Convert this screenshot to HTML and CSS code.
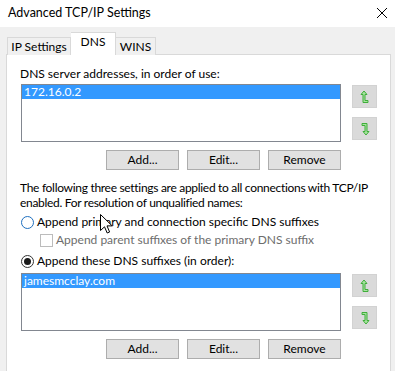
FILE: index.html
```html
<!DOCTYPE html>
<html>
<head>
<meta charset="utf-8">
<link rel="stylesheet" href="styles.css">
</head>
<body>
<div class="dialog">
  <div class="titlebar">
    <span class="title">Advanced TCP/IP Settings</span>
    <svg class="close" width="12" height="12" viewBox="0 0 12 12"><path d="M1 1L11 11M11 1L1 11" stroke="#000" stroke-width="1"/></svg>
  </div>
  <div class="body">
    <div class="tabs">
      <div class="tab first">IP Settings</div>
      <div class="tab active">DNS</div>
      <div class="tab last">WINS</div>
    </div>
    <div class="panel">
      <div class="label">DNS server addresses, in order of use:</div>
      <div class="listrow">
        <div class="listbox"><div class="item">172.16.0.2</div></div>
        <div class="arrows">
          <div class="arrowbtn"><svg width="10" height="14" viewBox="0 0 10 14"><path d="M4 1L1 4.5H3V12.5H8V10.5H5V4.5H7Z" fill="#a7e3a0" stroke="#3fae3a" stroke-width="1" stroke-linejoin="miter"/></svg></div>
          <div class="arrowbtn"><svg width="10" height="14" viewBox="0 0 10 14"><path d="M2 1.5H7V9.5H9L6 13L3 9.5H5V3.5H2Z" fill="#a7e3a0" stroke="#3fae3a" stroke-width="1"/></svg></div>
        </div>
      </div>
      <div class="btnrow">
        <div class="btn">Add...</div>
        <div class="btn">Edit...</div>
        <div class="btn">Remove</div>
      </div>
      <p class="note">The following three settings are applied to all connections with TCP/IP<br>enabled. For resolution of unqualified names:</p>
      <div class="opt radio-row"><span class="radio"></span>Append primary and connection specific DNS suffixes</div>
      <div class="opt check-row"><span class="check"></span>Append parent suffixes of the primary DNS suffix</div>
      <div class="opt radio-row2"><span class="radio on"><span class="dot"></span></span>Append these DNS suffixes (in order):</div>
      <div class="listrow second">
        <div class="listbox"><div class="item">jamesmcclay.com</div></div>
        <div class="arrows">
          <div class="arrowbtn"><svg width="10" height="14" viewBox="0 0 10 14"><path d="M4 1L1 4.5H3V12.5H8V10.5H5V4.5H7Z" fill="#a7e3a0" stroke="#3fae3a" stroke-width="1"/></svg></div>
          <div class="arrowbtn"><svg width="10" height="14" viewBox="0 0 10 14"><path d="M2 1.5H7V9.5H9L6 13L3 9.5H5V3.5H2Z" fill="#a7e3a0" stroke="#3fae3a" stroke-width="1"/></svg></div>
        </div>
      </div>
      <div class="btnrow">
        <div class="btn">Add...</div>
        <div class="btn">Edit...</div>
        <div class="btn">Remove</div>
      </div>
    </div>
  </div>
  <svg class="cursor" width="13" height="20" viewBox="0 0 13 20"><path d="M0.5 0.5V16.5L4.5 12.8L7.2 19L9.6 18L7 11.9H12.2Z" fill="#fff" stroke="#000" stroke-width="1" stroke-linejoin="miter"/></svg>
</div>
</body>
</html>
```
FILE: styles.css
```css
html, body {
  margin: 0;
  padding: 0;
  background: #f0f0f0;
}
body {
  font-family: Lato, "Noto Sans", sans-serif;
  font-size: 12px;
  color: #000;
}
.dialog {
  position: relative;
  width: 395px;
  height: 371px;
  overflow: hidden;
}
.titlebar {
  height: 27px;
  background: #fff;
  display: flex;
  align-items: center;
  justify-content: space-between;
  padding: 0 7px 2px 8px;
  box-sizing: border-box;
}
.title {
  font-size: 12.5px;
}
.body {
  padding: 6px 4px 0 6px;
}
.tabs {
  display: flex;
  align-items: flex-end;
  height: 22px;
  padding-left: 1px;
  position: relative;
  z-index: 1;
  margin-bottom: -1px;
}
.tab {
  height: 18px;
  line-height: 18px;
  border: 1px solid #d9d9d9;
  border-bottom: none;
  background: #f0f0f0;
  box-sizing: border-box;
  text-align: center;
}
.tab.first {
  width: 64px;
}
.tab.active {
  height: 23px;
  width: 45px;
  background: #fff;
  line-height: 17px;
  border-left: none;
}
.tab.last {
  width: 40px;
  border-left: none;
}
.panel {
  background: #fff;
  border: 1px solid #d9d9d9;
  height: 330px;
  padding: 11px 0 0 13px;
  box-sizing: border-box;
}
.label {
  line-height: 16px;
  margin-bottom: 2px;
}
.listrow {
  display: flex;
  gap: 11px;
}
.listbox {
  width: 320px;
  height: 58px;
  border: 1px solid #828790;
  box-sizing: border-box;
  margin-left: 1px;
}
.item {
  background: #3399ff;
  color: #fff;
  height: 14px;
  line-height: 14px;
  padding-left: 2px;
}
.arrows {
  display: flex;
  flex-direction: column;
  gap: 9px;
  padding-top: 1px;
}
.arrowbtn {
  width: 25px;
  height: 23px;
  background: #dadada;
  border: 1px solid #d2d2d2;
  box-sizing: border-box;
  display: flex;
  align-items: center;
  justify-content: center;
}
.btnrow {
  display: flex;
  gap: 8px;
  justify-content: flex-end;
  width: 321px;
  margin-top: 8px;
}
.btn {
  width: 73px;
  height: 20px;
  line-height: 18px;
  text-align: center;
  background: #e1e1e1;
  border: 1px solid #adadad;
  box-sizing: border-box;
}
.note {
  margin: 11px 0 0 0;
  line-height: 14.5px;
  white-space: nowrap;
  letter-spacing: -0.3px;
}
.opt {
  display: flex;
  align-items: center;
  line-height: 16px;
}
.radio-row {
  margin-top: 4px;
  margin-left: 1px;
}
.check-row {
  margin-top: 2px;
  margin-left: 20px;
  color: #6d6d6d;
}
.radio-row2 {
  margin-top: 5px;
  margin-left: 1px;
  margin-bottom: 4px;
}
.radio {
  width: 13px;
  height: 13px;
  border: 1px solid #333;
  border-radius: 50%;
  box-sizing: border-box;
  margin-right: 3px;
  display: flex;
  align-items: center;
  justify-content: center;
  background: #fff;
}
.radio-row .radio {
  border-color: #1e6fbf;
}
.dot {
  width: 7px;
  height: 7px;
  border-radius: 50%;
  background: #1a1a1a;
}
.check {
  width: 13px;
  height: 13px;
  border: 1px solid #bcbcbc;
  box-sizing: border-box;
  margin-right: 3px;
  background: #fff;
}
.cursor {
  position: absolute;
  left: 100px;
  top: 214px;
}
```
